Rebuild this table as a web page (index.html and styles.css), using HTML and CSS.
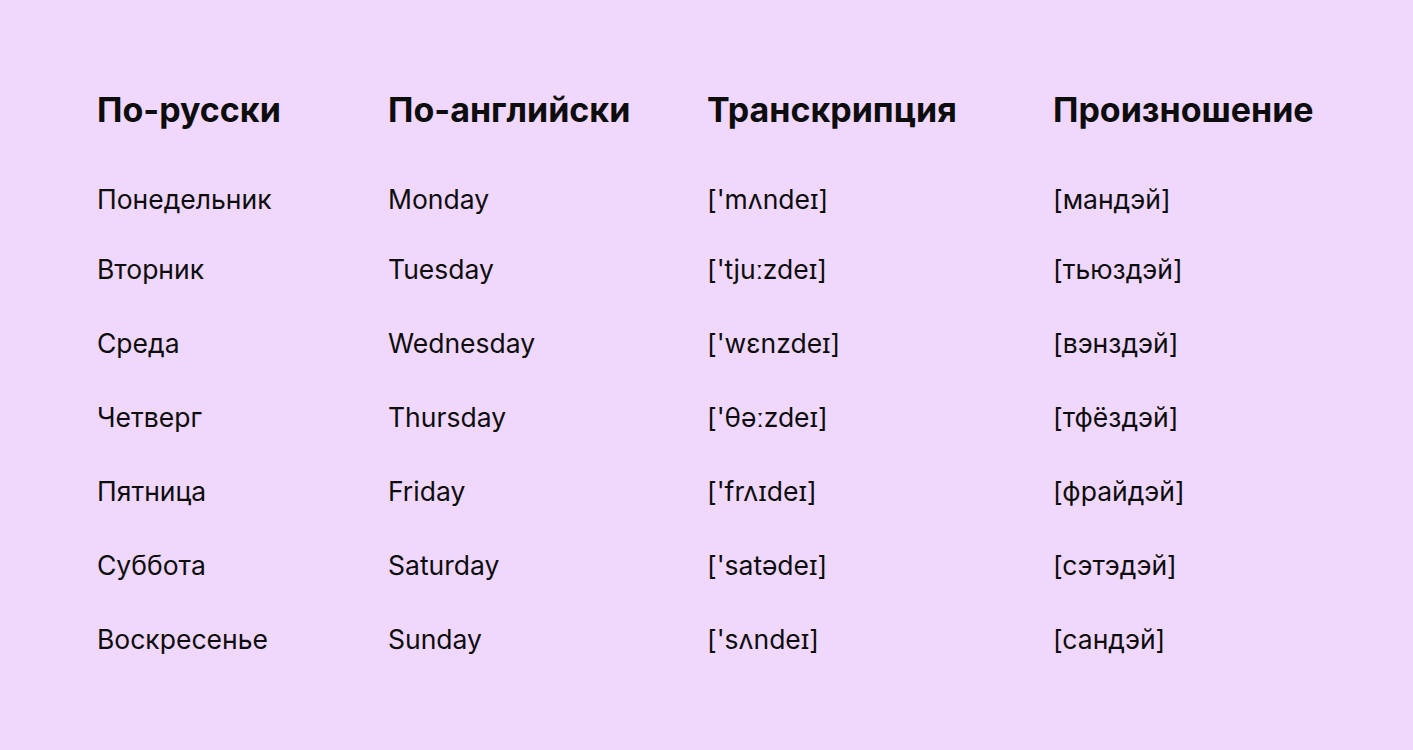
FILE: index.html
```html
<!DOCTYPE html>
<html lang="ru">
<head>
<meta charset="utf-8">
<link rel="stylesheet" href="styles.css">
</head>
<body>
<div class="page">
  <div class="table">
    <div class="row head">
      <div>По-русски</div><div>По-английски</div><div>Транскрипция</div><div>Произношение</div>
    </div>
    <div class="row r1">
      <div>Понедельник</div><div>Monday</div><div>['mʌndeɪ]</div><div>[мандэй]</div>
    </div>
    <div class="row r2">
      <div>Вторник</div><div>Tuesday</div><div>['tjuːzdeɪ]</div><div>[тьюздэй]</div>
    </div>
    <div class="row">
      <div>Среда</div><div>Wednesday</div><div>['wɛnzdeɪ]</div><div>[вэнздэй]</div>
    </div>
    <div class="row">
      <div>Четверг</div><div>Thursday</div><div>['θəːzdeɪ]</div><div>[тфёздэй]</div>
    </div>
    <div class="row">
      <div>Пятница</div><div>Friday</div><div>['frʌɪdeɪ]</div><div>[фрайдэй]</div>
    </div>
    <div class="row">
      <div>Суббота</div><div>Saturday</div><div>['satədeɪ]</div><div>[сэтэдэй]</div>
    </div>
    <div class="row">
      <div>Воскресенье</div><div>Sunday</div><div>['sʌndeɪ]</div><div>[сандэй]</div>
    </div>
  </div>
</div>
</body>
</html>
```
FILE: styles.css
```css
html, body {
  margin: 0;
  padding: 0;
  background: #f0d7fc;
}
.page {
  width: 1413px;
  height: 750px;
  box-sizing: border-box;
  padding: 84px 0 0 97px;
  font-family: Inter, "Noto Sans", sans-serif;
  color: #0d0d0d;
}
.table {
  display: flex;
  flex-direction: column;
}
.row {
  display: grid;
  grid-template-columns: 291px 319px 346px auto;
  height: 74px;
  align-items: center;
  font-size: 26.5px;
  font-weight: 400;
}
.row.head {
  font-size: 34px;
  font-weight: 700;
  height: 50px;
  margin-bottom: 40px;
}
.row.r1 {
  height: 67px;
  margin-top: -9px;
}
```
